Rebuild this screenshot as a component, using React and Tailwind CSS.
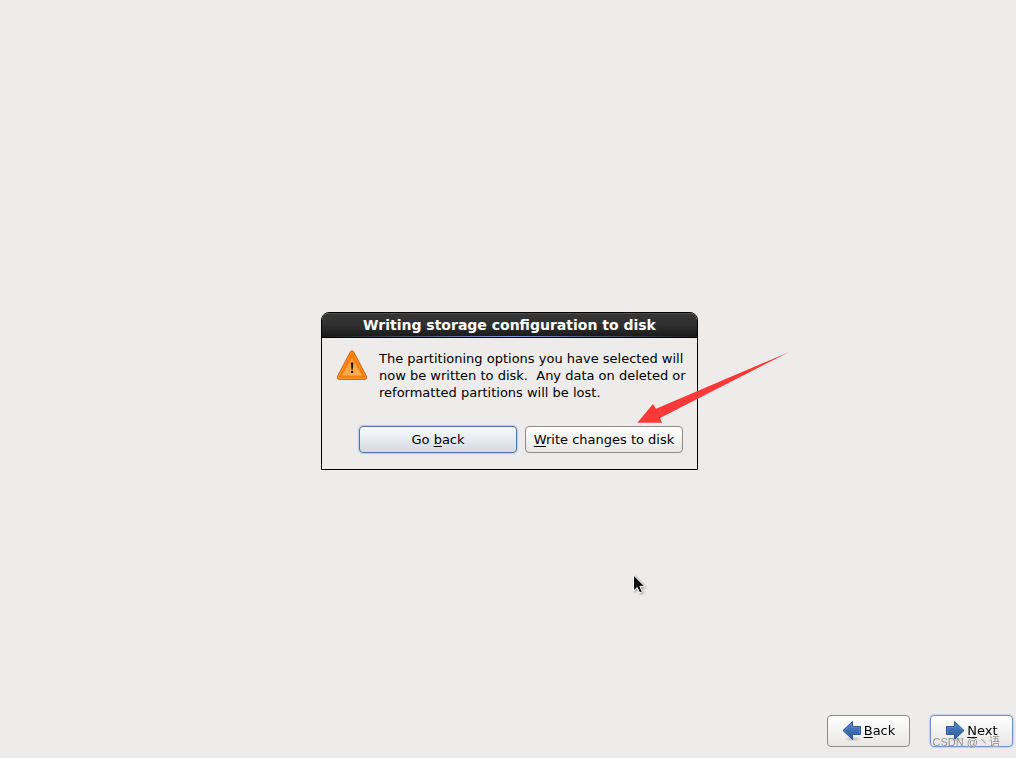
import React from "react";

const WarningIcon = () => (
  <svg
    className="shrink-0"
    width="32"
    height="32"
    viewBox="0 0 32 32"
    aria-hidden="true"
  >
    <defs>
      <linearGradient id="warnFill" x1="0" y1="0" x2="0" y2="1">
        <stop offset="0" stopColor="#f57900" />
        <stop offset="1" stopColor="#f8800c" />
      </linearGradient>
      <linearGradient id="warnInner" x1="0" y1="0" x2="0" y2="1">
        <stop offset="0" stopColor="#fa9a3a" />
        <stop offset="1" stopColor="#fcb04f" />
      </linearGradient>
    </defs>
    <path
      d="M14.2 2 Q16 -0.6 17.8 2 L30.6 26.6 Q31.4 29.4 28.6 29.4 L3.4 29.4 Q0.6 29.4 1.4 26.6 Z"
      fill="url(#warnFill)"
      stroke="#d4610c"
      strokeWidth="1"
    />
    <path
      d="M15 2.8 Q16 1.2 17 2.8 L29.5 26.8 Q30 28.4 28.4 28.4 L3.6 28.4 Q2 28.4 2.5 26.8 Z"
      fill="none"
      stroke="#fba24c"
      strokeWidth="0.7"
    />
    <path d="M16 7.5 L26 25.5 L6 25.5 Z" fill="url(#warnInner)" />
    <path d="M14.9 12.5 H17.3 L16.8 19.5 H15.4 Z" fill="#1c1206" />
    <rect x="15" y="20.8" width="2.2" height="2.2" rx="0.6" fill="#1c1206" />
  </svg>
);

const ArrowIcon = ({ direction }) => {
  const id = `arrow-${direction}`;
  const isBack = direction === "back";

  return (
    <svg width="20" height="22" viewBox="0 0 20 22" aria-hidden="true">
      <defs>
        <linearGradient id={id} x1="0" y1="0" x2="0" y2="1">
          <stop offset="0" stopColor="#5080be" />
          <stop offset="1" stopColor="#2f5ea3" />
        </linearGradient>
        <radialGradient id={`${id}-shadow`}>
          <stop offset="0" stopColor="#000" stopOpacity="0.22" />
          <stop offset="1" stopColor="#000" stopOpacity="0" />
        </radialGradient>
      </defs>
      <ellipse cx="11" cy="19" rx="9" ry="2.5" fill={`url(#${id}-shadow)`} />
      <g transform={isBack ? undefined : "translate(20 0) scale(-1 1)"}>
        <path
          d="M1 10.5 L10.5 1.5 V6.5 H18.5 V14.5 H10.5 V19.5 Z"
          fill={`url(#${id})`}
          stroke="#2b569a"
          strokeWidth="1"
          strokeLinejoin="round"
        />
        <path
          d="M2.6 10.5 L9.5 4 V7.5 H17.5 V13.5"
          fill="none"
          stroke="#6d97cd"
          strokeWidth="0.6"
        />
      </g>
    </svg>
  );
};

const Pointer = () => (
  <svg
    className="pointer-events-none fixed top-[574px] left-[632px] drop-shadow-[1px_1px_1px_#00000055]"
    width="14"
    height="22"
    viewBox="0 0 14 22"
    aria-hidden="true"
  >
    <path
      d="M1.5 1 V17 L5.2 13.6 L7.7 19 L10.3 17.8 L7.9 12.4 H12.8 Z"
      fill="#111"
      stroke="#fff"
      strokeWidth="1"
    />
  </svg>
);

const MarkerArrow = () => (
  <svg
    className="pointer-events-none absolute top-[38px] left-[314px]"
    width="155"
    height="73"
    viewBox="0 0 155 73"
    aria-hidden="true"
  >
    <path
      d="M1.3 71.7 L17 53 L20 57.7 L153.7 0.7 L24 67 L26 71.7 Z"
      fill="#fd3838"
    />
  </svg>
);

const StorageDialog = () => (
  <section
    role="dialog"
    aria-labelledby="dialog-title"
    aria-describedby="dialog-text"
    className="relative w-[377px] rounded-t-lg border border-black bg-[#edeceb]"
  >
    <header className="overflow-hidden rounded-t-[7px] border-b border-black bg-linear-to-b from-[#363636] via-[#303030] to-[#191919] text-center">
      <h1
        id="dialog-title"
        className="border-t border-[#4a4d4a] text-[14px] leading-[22px] font-bold text-white"
      >
        Writing storage configuration to disk
      </h1>
      <div className="h-px bg-linear-to-r from-[#1c1c1c] via-[#7ca0e0] to-[#1c1c1c]" />
    </header>

    <div className="px-[14px] pt-3 pb-4">
      <div className="flex gap-[11px]">
        <WarningIcon />
        <p
          id="dialog-text"
          className="text-[13px] leading-[17px] whitespace-pre"
        >
          {"The partitioning options you have selected will\nnow be written to disk.  Any data on deleted or\nreformatted partitions will be lost."}
        </p>
      </div>

      <div className="mt-[25px] flex justify-end gap-2">
        <button
          type="button"
          className="h-[27px] w-[158px] rounded border border-[#4f76ac] bg-linear-to-b from-[#f8fafd] to-[#d5dae0] text-[13px] shadow-[0_0_1px_1px_#b8cbe4]"
        >
          Go <u className="underline-offset-2">b</u>ack
        </button>
        <button
          type="button"
          className="h-[27px] w-[158px] rounded border border-[#8e8b88] bg-linear-to-b from-white to-[#e8e7e6] text-[13px]"
        >
          <u className="underline-offset-2">W</u>rite changes to disk
        </button>
      </div>
    </div>

    <MarkerArrow />
  </section>
);

const App = () => {
  return (
    <div className="flex min-h-screen flex-col bg-[#edeceb] font-['DejaVu_Sans',sans-serif] text-black">
      <main className="fixed inset-0 flex items-center justify-center pt-6 pl-[3px]">
        <StorageDialog />
      </main>

      {/* NAVIGATION */}
      <footer className="relative mt-auto flex justify-end gap-5 pr-[3px] pb-[11px]">
        <button
          type="button"
          className="flex h-8 w-[83px] items-center justify-center gap-0.5 rounded border border-[#8e8b88] bg-linear-to-b from-white to-[#e8e7e6] text-[13px]"
        >
          <ArrowIcon direction="back" />
          <span>
            <u className="underline-offset-2">B</u>ack
          </span>
        </button>
        <button
          type="button"
          className="flex h-8 w-[83px] items-center justify-center gap-0.5 rounded border border-[#6f93c6] bg-linear-to-b from-white to-[#e8e7e6] text-[13px] shadow-[0_0_1px_1px_#c3d3e8]"
        >
          <ArrowIcon direction="next" />
          <span>
            <u className="underline-offset-2">N</u>ext
          </span>
        </button>
        <span className="pointer-events-none absolute right-4 bottom-2 font-['Liberation_Sans','Noto_Sans_CJK_SC',sans-serif] text-[11px] leading-4 text-[#8c8c8c] [text-shadow:0_0_1px_#fff]">
          CSDN @丶语
        </span>
      </footer>

      <Pointer />
    </div>
  );
};

export default App;
